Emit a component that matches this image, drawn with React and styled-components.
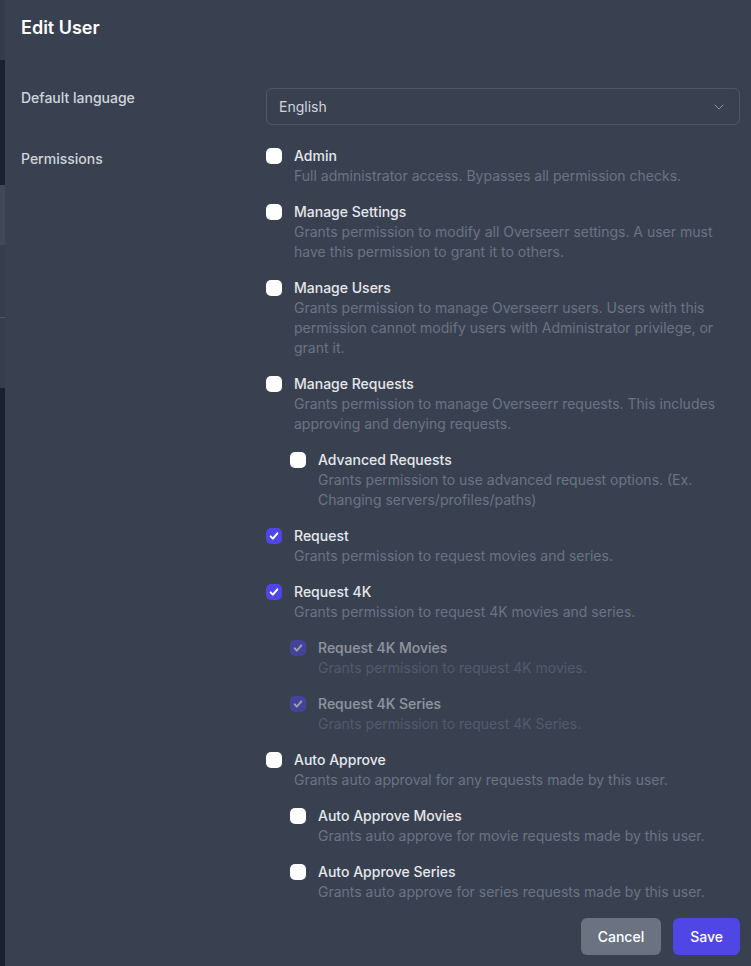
import React from "react";
import styled, { createGlobalStyle } from "styled-components";
import { ChevronDown } from "lucide-react";

const Global = createGlobalStyle`
  html, body {
    margin: 0;
    padding: 0;
    background: #19212f;
    font-family: Inter, "Noto Sans", sans-serif;
    -webkit-font-smoothing: antialiased;
  }
`;

const Page = styled.div`
  display: flex;
  min-height: 966px;
  width: 751px;
  overflow: hidden;
`;

const Behind = styled.div`
  width: 5px;
  flex-shrink: 0;
  display: flex;
  flex-direction: column;
`;

const Strip = styled.div`
  height: ${(p) => p.h}px;
  background: ${(p) => p.c};
  border-bottom: ${(p) => (p.line ? "1px solid #4b5563" : "none")};
`;

const Modal = styled.div`
  flex: 1;
  background: #394151;
  padding: 15px 11px 10px 16px;
  display: flex;
  flex-direction: column;
`;

const Title = styled.h3`
  margin: 0;
  color: #fff;
  font-size: 18px;
  line-height: 26px;
  font-weight: 600;
`;

const Form = styled.div`
  margin-top: 47px;
  display: flex;
  flex-direction: column;
  gap: 21px;
`;

const Row = styled.div`
  display: grid;
  grid-template-columns: 245px 1fr;
  align-items: start;
`;

const Label = styled.div`
  color: #d1d5db;
  font-size: 14px;
  font-weight: 500;
  line-height: 20px;
  padding-top: ${(p) => p.pt || 0}px;
`;

const Select = styled.div`
  height: 37px;
  box-sizing: border-box;
  border: 1px solid #4f5868;
  border-radius: 6px;
  display: flex;
  align-items: center;
  justify-content: space-between;
  padding: 0 12px;
  color: #d1d5db;
  font-size: 14px;
  svg {
    color: #8b93a1;
  }
`;

const List = styled.div`
  display: flex;
  flex-direction: column;
  gap: 16px;
`;

const Item = styled.div`
  display: flex;
  gap: 12px;
  padding-left: ${(p) => (p.nested ? 24 : 0)}px;
  opacity: ${(p) => (p.disabled ? 0.5 : 1)};
`;

const Box = styled.div`
  width: 16px;
  height: 16px;
  margin-top: 2px;
  border-radius: 5px;
  flex-shrink: 0;
  background: ${(p) => (p.checked ? "#4f46e5" : "#ffffff")};
  display: flex;
  align-items: center;
  justify-content: center;
`;

const Text = styled.div`
  display: flex;
  flex-direction: column;
`;

const Name = styled.div`
  color: #e5e7eb;
  font-size: 14px;
  font-weight: 500;
  line-height: 20px;
`;

const Desc = styled.div`
  color: #6b7483;
  font-size: 14px;
  line-height: 20px;
`;

const Footer = styled.div`
  margin-top: 16px;
  display: flex;
  justify-content: flex-end;
  gap: 12px;
`;

const Button = styled.button`
  height: 37px;
  padding: 0 17px;
  border: none;
  border-radius: 6px;
  font-family: inherit;
  font-size: 14px;
  font-weight: 500;
  color: #fff;
  background: ${(p) => (p.primary ? "#4f46e5" : "#6b7280")};
`;

const Check = () => (
  <svg width="12" height="12" viewBox="0 0 16 16">
    <path
      d="M3.5 8.5l3 3 6-7"
      fill="none"
      stroke="#fff"
      strokeWidth="2.6"
      strokeLinecap="round"
      strokeLinejoin="round"
    />
  </svg>
);

const perms = [
  { name: "Admin", desc: "Full administrator access. Bypasses all permission checks." },
  {
    name: "Manage Settings",
    desc: "Grants permission to modify all Overseerr settings. A user must have this permission to grant it to others.",
  },
  {
    name: "Manage Users",
    desc: "Grants permission to manage Overseerr users. Users with this permission cannot modify users with Administrator privilege, or grant it.",
  },
  {
    name: "Manage Requests",
    desc: "Grants permission to manage Overseerr requests. This includes approving and denying requests.",
  },
  {
    name: "Advanced Requests",
    desc: "Grants permission to use advanced request options. (Ex. Changing servers/profiles/paths)",
    nested: true,
  },
  { name: "Request", desc: "Grants permission to request movies and series.", checked: true },
  { name: "Request 4K", desc: "Grants permission to request 4K movies and series.", checked: true },
  {
    name: "Request 4K Movies",
    desc: "Grants permission to request 4K movies.",
    checked: true,
    nested: true,
    disabled: true,
  },
  {
    name: "Request 4K Series",
    desc: "Grants permission to request 4K Series.",
    checked: true,
    nested: true,
    disabled: true,
  },
  { name: "Auto Approve", desc: "Grants auto approval for any requests made by this user." },
  {
    name: "Auto Approve Movies",
    desc: "Grants auto approve for movie requests made by this user.",
    nested: true,
  },
  {
    name: "Auto Approve Series",
    desc: "Grants auto approve for series requests made by this user.",
    nested: true,
  },
];

export default function App() {
  return (
    <Page>
      <Global />
      <Behind>
        <Strip h={60} c="#353d4c" />
        <Strip h={125} c="#1a2230" />
        <Strip h={60} c="#414957" />
        <Strip h={72} c="#363e4c" line />
        <Strip h={70} c="#363e4c" />
        <Strip h={578} c="#19212f" />
      </Behind>
      <Modal>
        <Title>Edit User</Title>
        <Form>
          <Row>
            <Label>Default language</Label>
            <Select>
              English
              <ChevronDown size={16} strokeWidth={1.5} />
            </Select>
          </Row>
          <Row>
            <Label pt={3}>Permissions</Label>
            <List>
              {perms.map((p) => (
                <Item key={p.name} nested={p.nested} disabled={p.disabled}>
                  <Box checked={p.checked}>{p.checked && <Check />}</Box>
                  <Text>
                    <Name>{p.name}</Name>
                    <Desc>{p.desc}</Desc>
                  </Text>
                </Item>
              ))}
            </List>
          </Row>
        </Form>
        <Footer>
          <Button>Cancel</Button>
          <Button primary>Save</Button>
        </Footer>
      </Modal>
    </Page>
  );
}
